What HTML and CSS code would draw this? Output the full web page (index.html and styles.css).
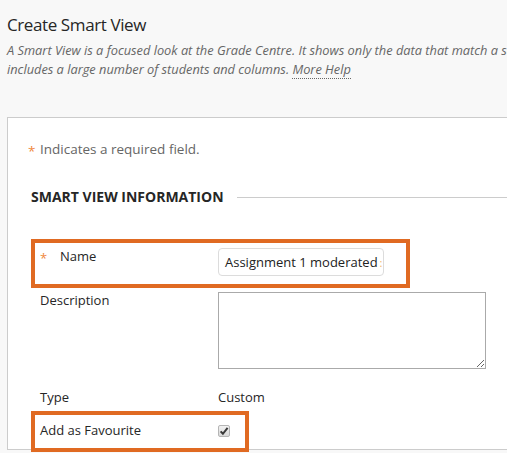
FILE: index.html
```html
<!DOCTYPE html>
<html lang="en">
<head>
<meta charset="utf-8">
<title>Create Smart View</title>
<link rel="stylesheet" href="styles.css">
</head>
<body>
<header class="page-head">
  <h1 class="title">Create Smart View</h1>
  <p class="intro"><span class="intro-line">A Smart View is a focused look at the Grade Centre. It shows only the data that match a set of criteria. It is useful when the Grade Centre</span><span class="intro-line">includes a large number of students and columns. <a class="help" href="#">More Help</a></span></p>
</header>
<main class="panel">
  <p class="req-note"><span class="star">*</span> Indicates a required field.</p>
  <h2 class="section-title"><span>SMART VIEW INFORMATION</span></h2>
  <div class="row row-name hl">
    <div class="label"><span class="star star-label">*</span>Name</div>
    <div class="field"><div class="input">Assignment 1 moderated<span class="cut">:</span></div></div>
  </div>
  <div class="row row-desc">
    <div class="label">Description</div>
    <div class="field"><textarea class="textarea"></textarea></div>
  </div>
  <div class="row row-type">
    <div class="label">Type</div>
    <div class="field">Custom</div>
  </div>
  <div class="row row-fav hl">
    <div class="label">Add as Favourite</div>
    <div class="field"><span class="check"><svg width="10" height="10" viewBox="0 0 10 10"><path d="M1.6 5.4 L3.9 7.8 L8.6 1.9" fill="none" stroke="#3a3a3a" stroke-width="2"/></svg></span></div>
  </div>
</main>
</body>
</html>
```
FILE: styles.css
```css
html, body {
  margin: 0;
  padding: 0;
  height: 453px;
  overflow: hidden;
}
body {
  background: #f8f8f8;
  font-family: "Open Sans", "Noto Sans", sans-serif;
  color: #262626;
}
.page-head {
  padding-left: 7px;
}
.title {
  margin: 13px 0 0 0;
  font-size: 17px;
  line-height: 24px;
  letter-spacing: -0.4px;
  font-weight: 400;
  color: #262626;
}
.intro {
  margin: 4px 0 0 0;
  font-size: 12.8px;
  line-height: 19px;
  font-style: italic;
  color: #666;
}
.intro-line {
  display: block;
  white-space: nowrap;
}
.help {
  color: #666;
  text-decoration: none;
  border-bottom: 1px dotted #666;
}
.panel {
  margin: 38px -20px 0 7px;
  background: #fff;
  border: 1px solid #ccc;
  height: 331px;
  padding: 0 0 0 23px;
}
.req-note {
  margin: 22px 0 0 -3px;
  font-size: 13.5px;
  line-height: 18px;
  color: #666;
}
.star {
  color: #f0883c;
  display: inline-block;
  vertical-align: -2px;
  margin-right: 1px;
}
.section-title {
  margin: 28px 0 0 0;
  display: flex;
  align-items: center;
  gap: 13px;
  font-size: 14px;
  line-height: 18px;
  font-weight: 700;
  color: #262626;
}
.section-title::after {
  content: "";
  flex: 1;
  height: 1px;
  background: #ccc;
}
.row {
  display: flex;
  margin-left: 4px;
  padding-left: 5px;
  font-size: 13px;
  line-height: 18px;
  color: #262626;
}
.label {
  width: 178px;
  flex: none;
  display: flex;
}
.hl {
  outline: 4px solid #e06a22;
}
.row-name {
  margin-top: 37px;
  width: 366px;
  height: 37px;
  padding-top: 4px;
}
.star-label {
  width: 14px;
  margin-right: 6px;
  vertical-align: 0;
  position: relative;
  top: 2px;
}
.input {
  margin-top: 1px;
  box-sizing: border-box;
  width: 166px;
  height: 28px;
  border: 1px solid #dcdcdc;
  border-radius: 4px;
  padding: 4px 0 0 6px;
  white-space: nowrap;
  overflow: hidden;
  color: #222;
}
.cut {
  color: #f2b36a;
  margin-left: 2px;
  font-size: 11px;
}
.row-desc {
  margin-top: 7px;
}
.textarea {
  display: block;
  margin: 1px 0 0 0;
  box-sizing: border-box;
  width: 268px;
  height: 77px;
  border: 1px solid #aaa;
  border-radius: 0;
  padding: 0;
  resize: both;
  font: inherit;
}
.row-type {
  margin-top: 19px;
}
.row-fav {
  margin-top: 9px;
  width: 205px;
  height: 27px;
  padding-top: 6px;
}
.check {
  display: inline-flex;
  align-items: center;
  justify-content: center;
  box-sizing: border-box;
  width: 12px;
  height: 12px;
  margin-top: 4px;
  border: 1px solid #b5b5b5;
  border-radius: 2px;
  background: linear-gradient(#f2f2f2, #d9d9d9);
}
```
